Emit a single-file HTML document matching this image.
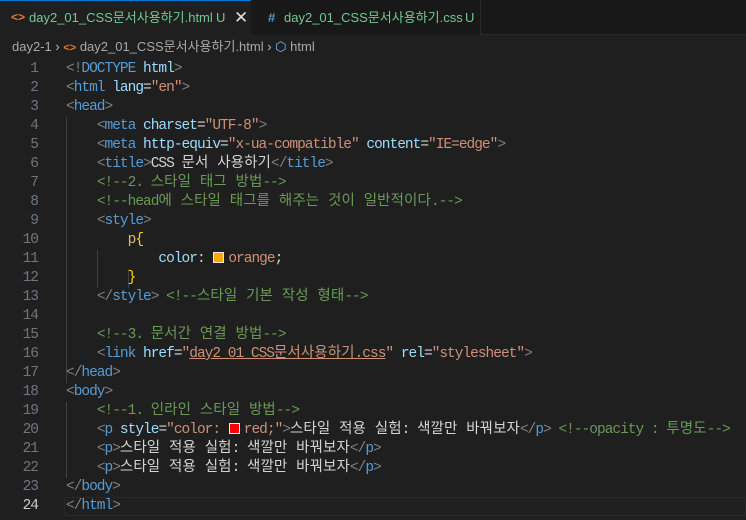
<!DOCTYPE html>
<html><head><meta charset="utf-8"><style>
body{margin:0;width:746px;height:520px;background:#1f1f1f;overflow:hidden;font-family:"Liberation Sans","Noto Sans CJK KR",sans-serif;position:relative}
.tabs{position:absolute;top:0;left:0;width:746px;height:35px;background:#181818;border-bottom:1px solid #2b2b2b;box-sizing:border-box}
.tab{position:absolute;top:0;height:35px;font-size:13px;line-height:35px;color:#73c991;white-space:nowrap}
.t1{left:0;width:251px;background:#1f1f1f;border-top:1px solid #0078d4;box-sizing:border-box;line-height:33px;height:36px}
.t2{left:252px;width:228px;background:#181818;border-right:1px solid #2b2b2b}
.bc{position:absolute;top:38px;left:12px;font-size:13px;color:#a9a9a9;line-height:18px;white-space:nowrap}
.code{position:absolute;top:60px;left:0;right:0;font-family:"Liberation Mono","Noto Sans CJK KR",monospace;font-size:14.5px;letter-spacing:-1px;line-height:19px;color:#d4d4d4}
.l{height:19px;position:relative;white-space:nowrap}
.n{position:absolute;left:0;width:38px;text-align:right;color:#6e7681}
.c{position:absolute;left:66px;white-space:pre}
.k{letter-spacing:0.1px}
.b{color:#808080}.t{color:#569cd6}.a{color:#9cdcfe}.s{color:#ce9178}.m{color:#6a9955}.y{color:#d7ba7d}.g{color:#ffd700}
.sw{display:inline-block;width:9px;height:9px;border:1px solid #eee;margin:0 4px 0 1px;vertical-align:-1px}
.ig{position:absolute;width:1px;background:#404040}
</style></head><body>
<div class="tabs">
<div class="tab t1"><span style="position:absolute;left:11px;color:#e37933;font-size:12px;font-weight:bold">&lt;&gt;</span><span style="position:absolute;left:29px">day2_01_CSS문서사용하기.html</span><span style="position:absolute;left:216px">U</span><span style="position:absolute;left:234px;color:#ddd;font-size:17px">✕</span></div>
<div class="tab t2"><span style="position:absolute;left:16px;color:#519aba;font-weight:bold">#</span><span style="position:absolute;left:32px">day2_01_CSS문서사용하기.css</span><span style="position:absolute;left:213px">U</span></div>
</div>
<div class="bc">day2-1 <span style="color:#bbb">›</span> <span style="color:#e37933;font-size:11px;font-weight:bold">&lt;&gt;</span> day2_01_CSS문서사용하기.html <span style="color:#bbb">›</span> <span style="color:#75beff">⬡</span> html</div>
<div class="ig" style="left:66px;top:117px;height:266px"></div>
<div class="ig" style="left:97px;top:250px;height:38px"></div>
<div class="ig" style="left:128px;top:269px;height:19px"></div>
<div class="ig" style="left:66px;top:402px;height:76px"></div>
<div class="code"><div class="l"><span class="n">1</span><span class="c"><span class="b">&lt;!</span><span class="t">DOCTYPE</span> <span class="a">html</span><span class="b">&gt;</span></span></div><div class="l"><span class="n">2</span><span class="c"><span class="b">&lt;</span><span class="t">html</span> <span class="a">lang</span>=<span class="s">"en"</span><span class="b">&gt;</span></span></div><div class="l"><span class="n">3</span><span class="c"><span class="b">&lt;</span><span class="t">head</span><span class="b">&gt;</span></span></div><div class="l"><span class="n">4</span><span class="c">    <span class="b">&lt;</span><span class="t">meta</span> <span class="a">charset</span>=<span class="s">"UTF-8"</span><span class="b">&gt;</span></span></div><div class="l"><span class="n">5</span><span class="c">    <span class="b">&lt;</span><span class="t">meta</span> <span class="a">http-equiv</span>=<span class="s">"x-ua-compatible"</span> <span class="a">content</span>=<span class="s">"IE=edge"</span><span class="b">&gt;</span></span></div><div class="l"><span class="n">6</span><span class="c">    <span class="b">&lt;</span><span class="t">title</span><span class="b">&gt;</span>CSS <span class="k">문서 사용하기</span><span class="b">&lt;/</span><span class="t">title</span><span class="b">&gt;</span></span></div><div class="l"><span class="n">7</span><span class="c">    <span class="m">&lt;!--2. <span class="k">스타일 태그 방법</span>--&gt;</span></span></div><div class="l"><span class="n">8</span><span class="c">    <span class="m">&lt;!--head<span class="k">에 스타일 태그를 해주는 것이 일반적이다</span>.--&gt;</span></span></div><div class="l"><span class="n">9</span><span class="c">    <span class="b">&lt;</span><span class="t">style</span><span class="b">&gt;</span></span></div><div class="l"><span class="n">10</span><span class="c">        <span class="y">p</span><span class="g">{</span></span></div><div class="l"><span class="n">11</span><span class="c">            <span class="a">color</span>: <span class="sw" style="background:#ffa500"></span><span class="s">orange</span>;</span></div><div class="l"><span class="n">12</span><span class="c">        <span class="g">}</span></span></div><div class="l"><span class="n">13</span><span class="c">    <span class="b">&lt;/</span><span class="t">style</span><span class="b">&gt;</span> <span class="m">&lt;!--<span class="k">스타일 기본 작성 형태</span>--&gt;</span></span></div><div class="l"><span class="n">14</span><span class="c"></span></div><div class="l"><span class="n">15</span><span class="c">    <span class="m">&lt;!--3. <span class="k">문서간 연결 방법</span>--&gt;</span></span></div><div class="l"><span class="n">16</span><span class="c">    <span class="b">&lt;</span><span class="t">link</span> <span class="a">href</span>=<span class="s">"<u>day2_01_CSS<span class="k">문서사용하기</span>.css</u>"</span> <span class="a">rel</span>=<span class="s">"stylesheet"</span><span class="b">&gt;</span></span></div><div class="l"><span class="n">17</span><span class="c"><span class="b">&lt;/</span><span class="t">head</span><span class="b">&gt;</span></span></div><div class="l"><span class="n">18</span><span class="c"><span class="b">&lt;</span><span class="t">body</span><span class="b">&gt;</span></span></div><div class="l"><span class="n">19</span><span class="c">    <span class="m">&lt;!--1. <span class="k">인라인 스타일 방법</span>--&gt;</span></span></div><div class="l"><span class="n">20</span><span class="c">    <span class="b">&lt;</span><span class="t">p</span> <span class="a">style</span>=<span class="s">"color: <span class="sw" style="background:#f00"></span>red;"</span><span class="b">&gt;</span><span class="k">스타일 적용 실험</span>: <span class="k">색깔만 바꿔보자</span><span class="b">&lt;/</span><span class="t">p</span><span class="b">&gt;</span> <span class="m">&lt;!--opacity : <span class="k">투명도</span>--&gt;</span></span></div><div class="l"><span class="n">21</span><span class="c">    <span class="b">&lt;</span><span class="t">p</span><span class="b">&gt;</span><span class="k">스타일 적용 실험</span>: <span class="k">색깔만 바꿔보자</span><span class="b">&lt;/</span><span class="t">p</span><span class="b">&gt;</span></span></div><div class="l"><span class="n">22</span><span class="c">    <span class="b">&lt;</span><span class="t">p</span><span class="b">&gt;</span><span class="k">스타일 적용 실험</span>: <span class="k">색깔만 바꿔보자</span><span class="b">&lt;/</span><span class="t">p</span><span class="b">&gt;</span></span></div><div class="l"><span class="n">23</span><span class="c"><span class="b">&lt;/</span><span class="t">body</span><span class="b">&gt;</span></span></div><div class="l" style="box-shadow:inset 0 0 0 1px #282828;margin-left:64px"><span class="n" style="left:-64px;color:#ccc">24</span><span class="c" style="left:2px"><span class="b">&lt;/</span><span class="t">html</span><span class="b">&gt;</span></span></div></div>
</body></html>
